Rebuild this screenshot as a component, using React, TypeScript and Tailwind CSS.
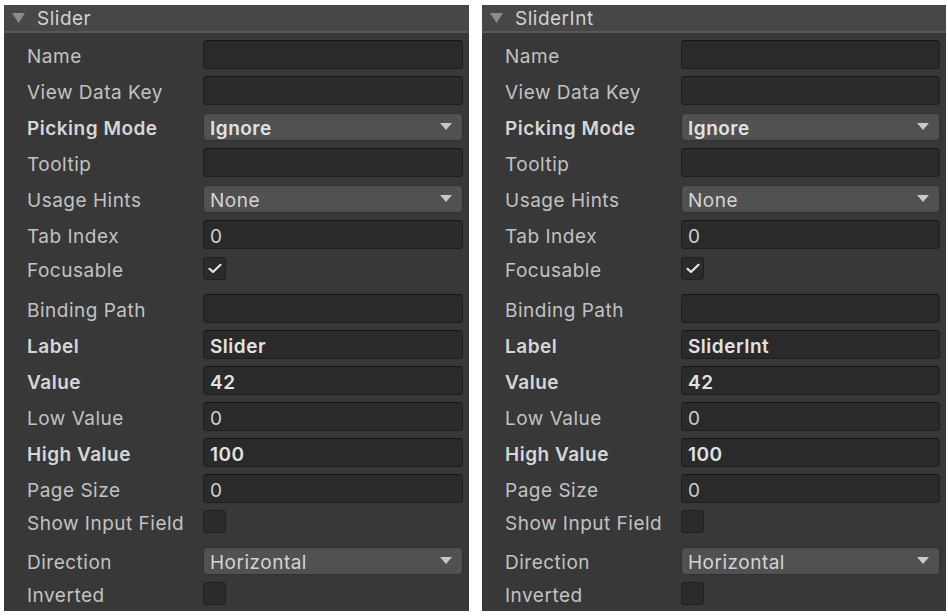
import type { ReactNode } from "react";

type Row =
  | { kind: "text"; label: string; value?: string; bold?: boolean; boldValue?: boolean }
  | { kind: "select"; label: string; value: string; bold?: boolean; boldValue?: boolean }
  | { kind: "check"; label: string; checked?: boolean; after: string };

const rows = (title: string): Row[] => [
  { kind: "text", label: "Name" },
  { kind: "text", label: "View Data Key" },
  { kind: "select", label: "Picking Mode", value: "Ignore", bold: true, boldValue: true },
  { kind: "text", label: "Tooltip" },
  { kind: "select", label: "Usage Hints", value: "None" },
  { kind: "text", label: "Tab Index", value: "0" },
  { kind: "check", label: "Focusable", checked: true, after: "h-[25px] mb-[6px]" },
  { kind: "text", label: "Binding Path" },
  { kind: "text", label: "Label", value: title, bold: true, boldValue: true },
  { kind: "text", label: "Value", value: "42", bold: true, boldValue: true },
  { kind: "text", label: "Low Value", value: "0" },
  { kind: "text", label: "High Value", value: "100", bold: true, boldValue: true },
  { kind: "text", label: "Page Size", value: "0" },
  { kind: "check", label: "Show Input Field", after: "h-[23px] mb-[6px]" },
  { kind: "select", label: "Direction", value: "Horizontal" },
  { kind: "check", label: "Inverted", after: "h-[23px]" },
];

function Label({ children, bold }: { children: ReactNode; bold?: boolean }) {
  return (
    <div
      className={`w-[176px] shrink-0 pt-[3px] text-[19px] leading-none tracking-[0.5px] ${
        bold ? "font-semibold text-[#d6d6d6]" : "text-[#c2c2c2]"
      }`}
    >
      {children}
    </div>
  );
}

function Checkbox({ checked }: { checked?: boolean }) {
  return (
    <div className="flex h-[23px] w-[23px] items-center justify-center rounded-[3px] border border-[#1f1f1f] bg-[#2b2b2b]">
      {checked && (
        <svg width="14" height="11" viewBox="0 0 14 11" fill="none">
          <path
            d="M1.5 5.8 L5 9 L12.5 1.8"
            stroke="#e6e6e6"
            strokeWidth="2.2"
            strokeLinecap="round"
            strokeLinejoin="round"
          />
        </svg>
      )}
    </div>
  );
}

function Panel({ title }: { title: string }) {
  return (
    <div className="flex h-[606px] flex-col bg-[#383838]">
      <div className="flex h-[28px] shrink-0 items-center gap-[12px] border-b-2 border-[#585858] bg-[#474747] pl-[8px]">
        <svg width="13" height="10" viewBox="0 0 13 10">
          <path d="M0 0 H13 L6.5 10 Z" fill="#8c8c8c" />
        </svg>
        <span className="text-[19px] leading-none tracking-[0.5px] text-[#d2d2d2]">{title}</span>
      </div>
      <div className="flex flex-col gap-[7px] pt-[7px] pl-[23px] pr-[6px]">
        {rows(title).map((row) => {
          if (row.kind === "check") {
            return (
              <div key={row.label} className={`flex items-center ${row.after}`}>
                <Label>{row.label}</Label>
                <Checkbox checked={row.checked} />
              </div>
            );
          }
          if (row.kind === "select") {
            return (
              <div key={row.label} className="flex h-[29px] items-center">
                <Label bold={row.bold}>{row.label}</Label>
                <div className="flex h-[28px] flex-1 items-center justify-between rounded-[4px] border border-[#303030] bg-[#515151] pl-[6px] pr-[10px]">
                  <span
                    className={`pt-[3px] text-[19px] leading-none tracking-[0.5px] ${
                      row.boldValue ? "font-semibold text-[#e2e2e2]" : "text-[#d4d4d4]"
                    }`}
                  >
                    {row.value}
                  </span>
                  <svg width="12" height="7" viewBox="0 0 12 7">
                    <path d="M0 0 H12 L6 7 Z" fill="#c8c8c8" />
                  </svg>
                </div>
              </div>
            );
          }
          return (
            <div key={row.label} className="flex h-[29px] items-center">
              <Label bold={row.bold}>{row.label}</Label>
              <div className="flex h-[29px] flex-1 items-center rounded-[4px] border border-[#1e1e1e] border-t-[#161616] bg-[#2a2a2a] pl-[6px]">
                <span
                  className={`pt-[3px] text-[19px] leading-none tracking-[0.5px] ${
                    row.boldValue ? "font-semibold text-[#e2e2e2]" : "text-[#cfcfcf]"
                  }`}
                >
                  {row.value}
                </span>
              </div>
            </div>
          );
        })}
      </div>
    </div>
  );
}

export default function App() {
  return (
    <div
      className="flex h-[616px] w-[948px] gap-[13px] bg-white pt-[5px] pl-[4px]"
      style={{ fontFamily: "Inter, 'Noto Sans', sans-serif" }}
    >
      <div className="w-[465px]">
        <Panel title="Slider" />
      </div>
      <div className="w-[464px]">
        <Panel title="SliderInt" />
      </div>
    </div>
  );
}
